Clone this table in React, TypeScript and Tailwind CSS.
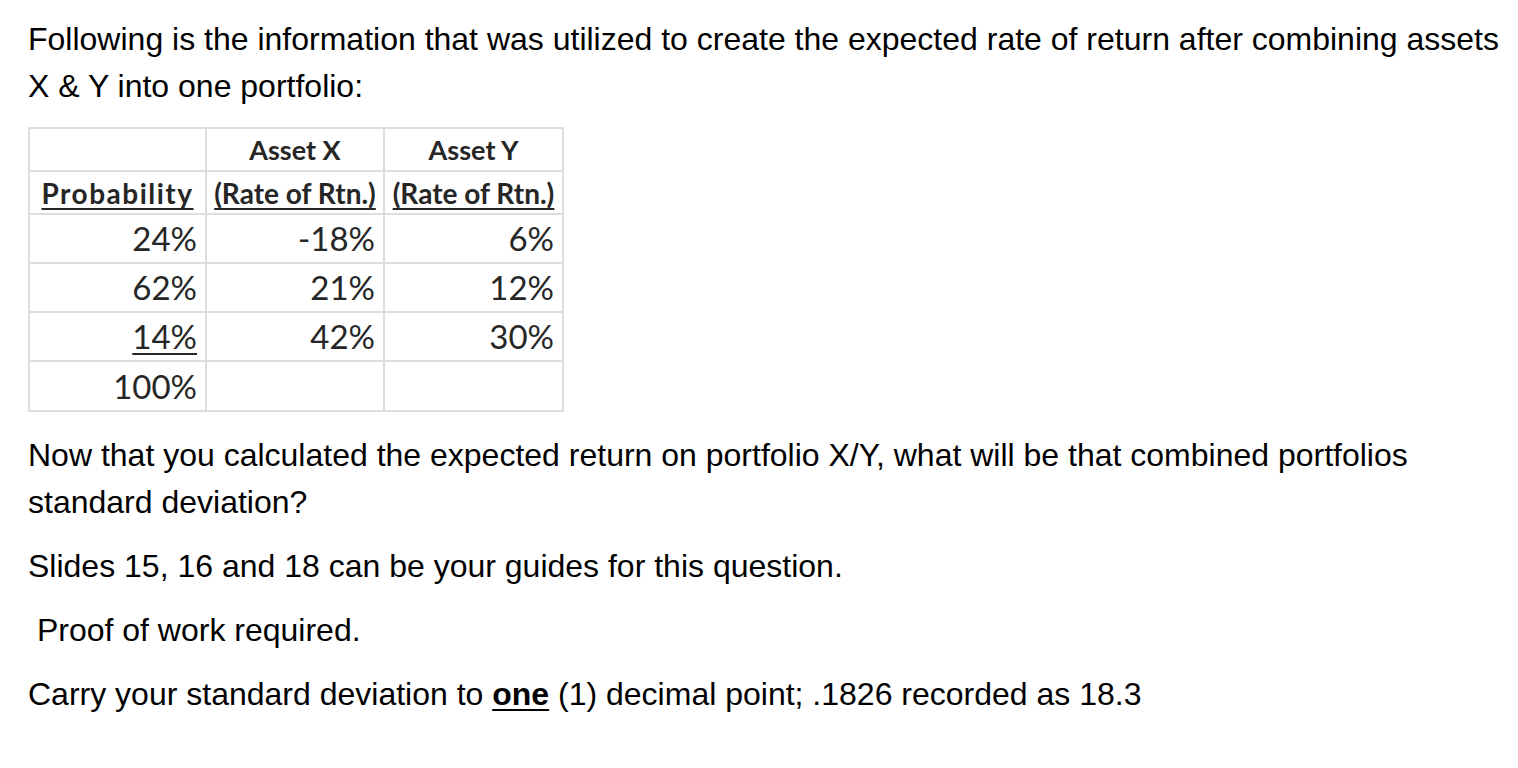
const rows = [
  { p: '24%', x: '-18%', y: '6%' },
  { p: '62%', x: '21%', y: '12%' },
  { p: '14%', x: '42%', y: '30%', under: true },
];

export default function App() {
  const cell = 'border-2 border-[#dedede] px-[8px] text-right';
  const uline = 'underline underline-offset-4 [text-decoration-skip-ink:none]';
  return (
    <div className="bg-white min-h-[768px] w-[1518px] pl-[28px] pt-[16px] text-black font-['Liberation_Sans',Arial,sans-serif] text-[32px] leading-[47px]">
      <p>
        Following is the information that was utilized to create the expected rate of return after combining assets X &amp; Y
        into one portfolio:
      </p>
      <table className="mt-[17px] border-collapse border-2 border-[#d4d4d4] font-['Lato',sans-serif] text-[#262626] leading-none">
        <tbody>
          <tr className="h-[43px] text-[27px] font-bold">
            <td className={`${cell} w-[177px]`}></td>
            <td className={`${cell} w-[178px] !text-center`}>Asset X</td>
            <td className={`${cell} w-[179px] !text-center`}>Asset Y</td>
          </tr>
          <tr className="h-[43px] text-[28px] font-bold">
            <td className={`${cell} !text-center !px-0`}>
              <span className={`${uline} tracking-[1.5px]`}>Probability</span>
            </td>
            <td className={`${cell} !text-center !px-0`}>
              <span className={uline}>(Rate of Rtn.)</span>
            </td>
            <td className={`${cell} !text-center !px-0`}>
              <span className={uline}>(Rate of Rtn.)</span>
            </td>
          </tr>
          {rows.map((r) => (
            <tr key={r.p} className="h-[49px] text-[33px]">
              <td className={cell}>
                <span className={r.under ? `${uline} decoration-2` : ''}>{r.p}</span>
              </td>
              <td className={cell}>{r.x}</td>
              <td className={cell}>{r.y}</td>
            </tr>
          ))}
          <tr className="h-[50px] text-[33px]">
            <td className={cell}>100%</td>
            <td className={cell}></td>
            <td className={cell}></td>
          </tr>
        </tbody>
      </table>
      <p className="mt-[20px]">
        Now that you calculated the expected return on portfolio X/Y, what will be that combined portfolios standard deviation?
      </p>
      <p className="mt-[17px]">Slides 15, 16 and 18 can be your guides for this question.</p>
      <p className="mt-[17px]">&nbsp;Proof of work required.</p>
      <p className="mt-[17px]">
        Carry your standard deviation to <span className={`font-bold ${uline} decoration-2`}>one</span> (1) decimal
        point; .1826 recorded as 18.3
      </p>
    </div>
  );
}
